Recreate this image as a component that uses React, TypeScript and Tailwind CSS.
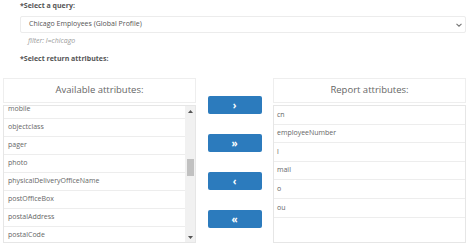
import React from "react";

const avail = ["mobile", "objectclass", "pager", "photo", "physicalDeliveryOfficeName", "postOfficeBox", "postalAddress", "postalCode"];
const report = ["cn", "employeeNumber", "l", "mail", "o", "ou"];
const btns = ["›", "»", "‹", "«"];

export default function App() {
  return (
    <div className="w-[474px] h-[243px] bg-white overflow-hidden text-[#555]" style={{ fontFamily: '"Open Sans", "Liberation Sans", sans-serif' }}>
      <div className="pl-[20px] pr-[8px] pt-[1px]">
        <div className="text-[7px] font-bold text-[#555] leading-[10px]">*Select a query:</div>
        <div className="mt-[5px] h-[17px] border border-[#ececec] rounded-[2px] flex items-center justify-between pl-[8px] pr-[3px] text-[7px] text-[#555]">
          <span>Chicago Employees (Global Profile)</span>
          <svg width="6" height="4" viewBox="0 0 6 4"><path d="M0.5 0.8 L3 3.2 L5.5 0.8" stroke="#777" strokeWidth="1.1" fill="none" /></svg>
        </div>
        <div className="mt-[3px] pl-[8px] text-[7px] italic text-[#9a9a9a] leading-[10px]">filter: l=chicago</div>
        <div className="mt-[8px] text-[7px] font-bold text-[#555] leading-[10px]">*Select return attributes:</div>
      </div>
      <div className="flex mt-[14px] pl-[3px]">
        <div className="w-[193px] flex flex-col">
          <div className="h-[25px] border border-[#eeeeee] flex items-center justify-center text-[9.5px] text-[#666]">Available attributes:</div>
          <div className="mt-[2px] h-[138px] border border-[#e6e6e6] flex overflow-hidden">
            <div className="flex-1 overflow-hidden">
              <div className="-mt-[5px]">
                {avail.map((a) => (
                  <div key={a} className="h-[18px] border-b border-[#ededed] flex items-center pl-[4px] text-[7px] text-[#666]">{a}</div>
                ))}
              </div>
            </div>
            <div className="w-[10px] bg-[#f1f1f1] flex flex-col items-center">
              <div className="h-[10px] flex items-center"><svg width="5" height="3" viewBox="0 0 5 3"><path d="M0 3 L2.5 0 L5 3Z" fill="#555" /></svg></div>
              <div className="mt-[43px] w-[7px] h-[17px] bg-[#c1c1c1]" />
              <div className="flex-1" />
              <div className="h-[10px] flex items-center"><svg width="5" height="3" viewBox="0 0 5 3"><path d="M0 0 L2.5 3 L5 0Z" fill="#555" /></svg></div>
            </div>
          </div>
        </div>
        <div className="w-[77px] flex flex-col items-center pt-[18px] gap-[20px]">
          {btns.map((b) => (
            <div key={b} className="w-[54px] h-[18px] bg-[#2c7bbd] rounded-[2px] flex items-center justify-center text-white text-[10px] font-bold leading-none">{b}</div>
          ))}
        </div>
        <div className="w-[193px] flex flex-col">
          <div className="h-[25px] border border-[#eeeeee] flex items-center justify-center text-[9.5px] text-[#666]">Report attributes:</div>
          <div className="mt-[2px] h-[138px] border border-[#e6e6e6]">
            {report.map((a) => (
              <div key={a} className="h-[18.6px] border-b border-[#ededed] flex items-center pl-[3px] text-[7px] text-[#666]">{a}</div>
            ))}
          </div>
        </div>
      </div>
    </div>
  );
}
